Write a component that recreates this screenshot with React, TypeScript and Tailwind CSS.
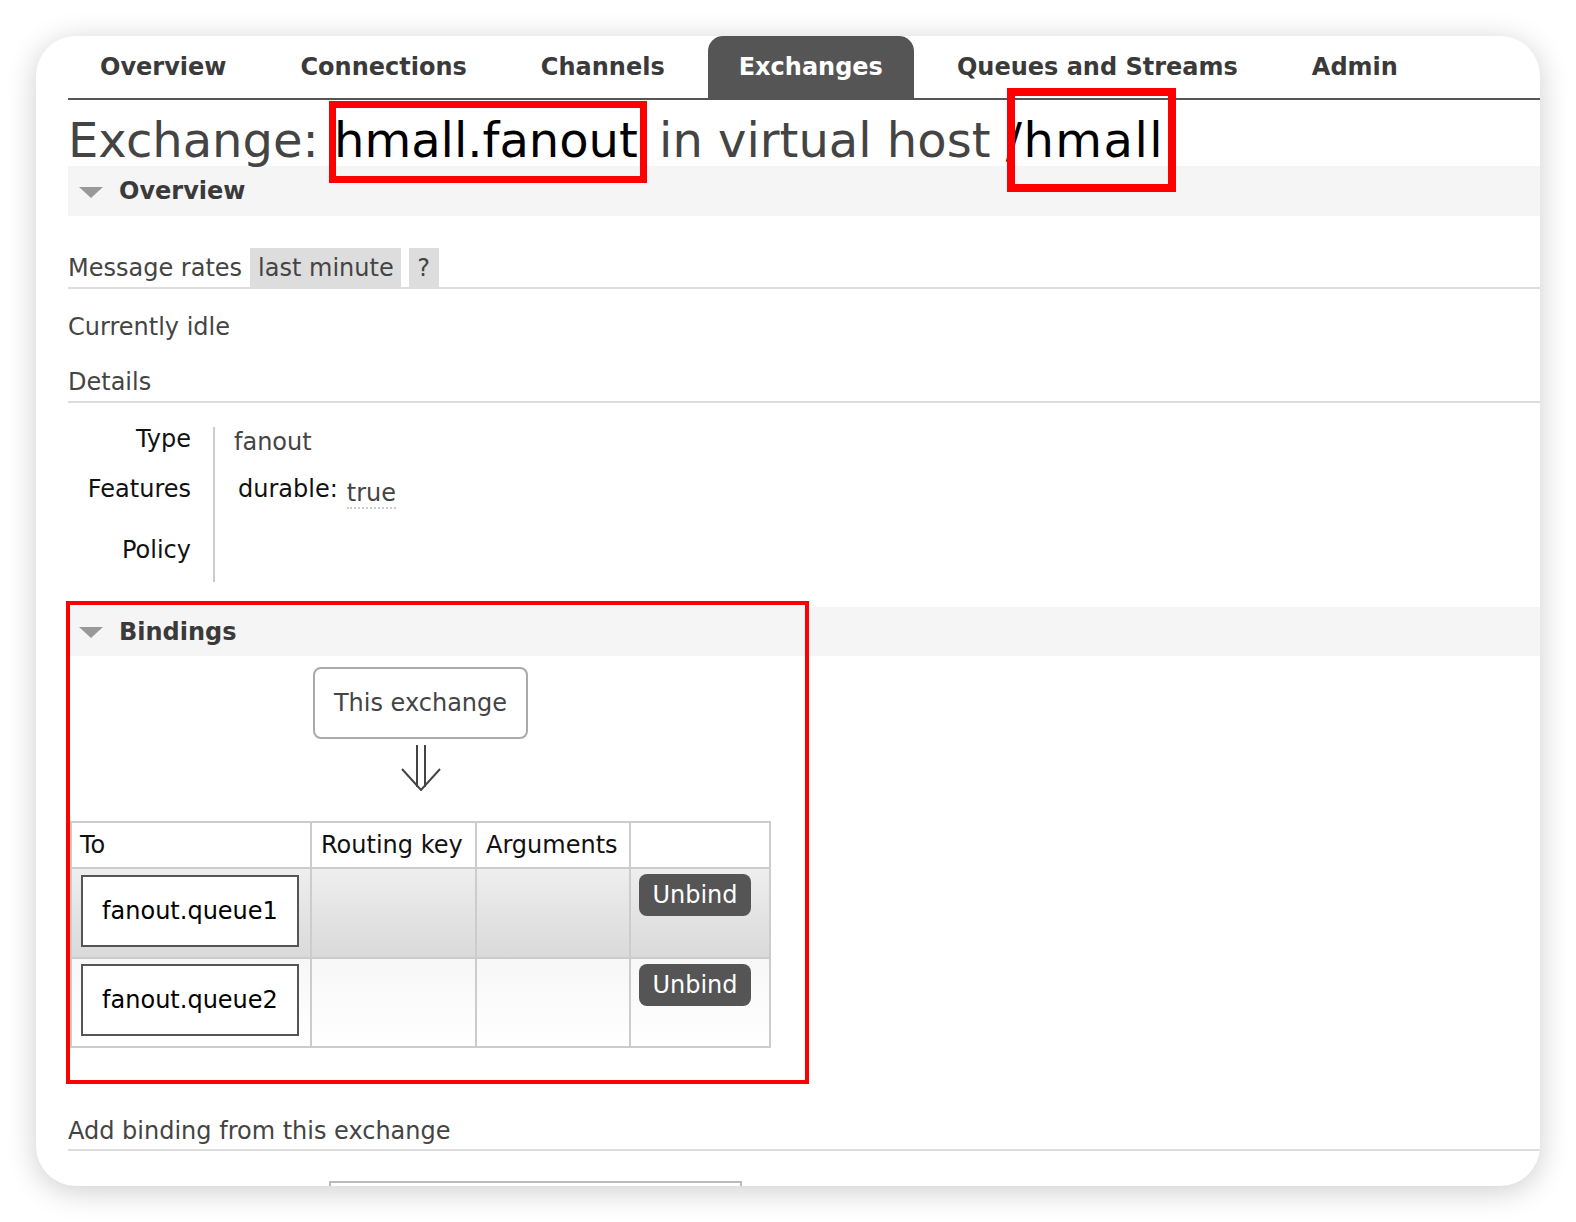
import React from "react";

const Triangle = () => (
  <svg width="24" height="11" viewBox="0 0 24 11" className="shrink-0">
    <polygon points="0,0 24,0 12,11" fill="#999999" />
  </svg>
);

const Arrow = () => (
  <svg width="40" height="46" viewBox="0 0 40 46">
    <line x1="16" y1="0" x2="16" y2="42" stroke="#444" strokeWidth="2" />
    <line x1="24" y1="0" x2="24" y2="42" stroke="#444" strokeWidth="2" />
    <polyline points="1,24 20,45 39,24" fill="none" stroke="#444" strokeWidth="2" />
  </svg>
);

const tabs = ["Overview", "Connections", "Channels", "Exchanges", "Queues and Streams", "Admin"];

export default function App() {
  return (
    <div
      className="w-[1576px] h-[1222px] bg-white pt-[36px] pl-[36px]"
      style={{ fontFamily: '"DejaVu Sans", Verdana, sans-serif' }}
    >
      <div className="relative w-[1504px] h-[1150px] bg-white rounded-[40px] overflow-hidden shadow-[0_5px_30px_rgba(0,0,0,0.2)] pl-[32px]">
        {/* Tabs */}
        <div className="flex items-end gap-[12px] h-[64px] border-b-2 border-[#555555] pl-[1px]">
          {tabs.map((t) => (
            <div
              key={t}
              className={
                t === "Exchanges"
                  ? "h-[62px] px-[31px] flex items-center text-[24px] font-bold text-white bg-[#555555] rounded-t-[15px] whitespace-nowrap"
                  : "h-[62px] px-[31px] flex items-center text-[24px] font-bold text-[#3a3a3a] whitespace-nowrap"
              }
            >
              {t}
            </div>
          ))}
        </div>

        {/* Title */}
        <h1 className="mt-[16px] text-[48px] leading-[48px] text-[#444444] whitespace-nowrap font-normal">
          <span>Exchange: </span>
          <span className="relative text-black">
            hmall.fanout
            <span className="absolute left-[-5px] right-[-9px] top-[-11px] bottom-[-15px] border-[7px] border-[#ff0000]" />
          </span>
          <span className="ml-[6px]"> in virtual host </span>
          <span className="relative text-black tracking-[1.5px]">
            /hmall
            <span className="absolute left-[1px] right-[-12px] top-[-24px] bottom-[-24px] border-[8px] border-[#ff0000]" />
          </span>
        </h1>

        {/* Overview band */}
        <div className="mt-[2px] h-[50px] bg-[#f5f5f5] flex items-center">
          <div className="ml-[11px] mt-[2px]">
            <Triangle />
          </div>
          <div className="ml-[16px] text-[24px] font-bold text-[#3a3a3a]">Overview</div>
        </div>

        {/* Message rates */}
        <div className="mt-[32px] flex items-stretch h-[41px] border-b-2 border-[#dddddd] text-[24px] text-[#444444]">
          <div className="flex items-center pr-[8px]">Message rates</div>
          <div className="flex items-center bg-[#dddddd] pl-[8px] pr-[7px] h-[39px]">last minute</div>
          <div className="flex items-center justify-center bg-[#dddddd] ml-[8px] w-[30px] h-[39px]">?</div>
        </div>

        <div className="mt-[24px] text-[24px] leading-[28px] text-[#444444]">Currently idle</div>

        <div className="mt-[27px] text-[24px] leading-[28px] text-[#444444] pb-[5px] border-b-2 border-[#dddddd]">
          Details
        </div>

        {/* Details table */}
        <div className="mt-[24px] flex text-[24px] leading-[24px]">
          <div className="w-[145px] pr-[22px] text-right text-[#111111] flex flex-col">
            <div className="h-[50px]">Type</div>
            <div className="h-[50px]">Features</div>
            <div className="h-[55px] pt-[11px]">Policy</div>
          </div>
          <div className="border-l-2 border-[#cccccc] pl-[19px] flex flex-col text-[#444444]">
            <div className="h-[50px] pt-[3px]">fanout</div>
            <div className="h-[50px] flex items-start pl-[4px]">
              <span className="text-[#111111]">durable:</span>
              <span className="ml-[9px] mt-[4px] pb-[2px] border-b-2 border-dotted border-[#cccccc]">true</span>
            </div>
            <div className="h-[55px]" />
          </div>
        </div>

        {/* Bindings band */}
        <div className="mt-[25px] h-[49px] bg-[#f5f5f5] flex items-center">
          <div className="ml-[11px] mt-[2px]">
            <Triangle />
          </div>
          <div className="ml-[16px] text-[24px] font-bold text-[#3a3a3a]">Bindings</div>
        </div>

        {/* Bindings content */}
        <div className="ml-[2px] w-[701px] flex flex-col items-center">
          <div className="mt-[11px] w-[215px] h-[72px] border-2 border-[#aaaaaa] rounded-[8px] flex items-center justify-center text-[24px] text-[#444444]">
            This exchange
          </div>
          <div className="mt-[6px] flex">
            <Arrow />
          </div>
          <div className="mt-[30px] w-[701px] border-t-2 border-l-2 border-[#cccccc] grid grid-cols-[240px_165px_154px_140px] text-[24px] text-[#111111]">
            <div className="h-[46px] border-r-2 border-b-2 border-[#cccccc] flex items-center pl-[8px]">To</div>
            <div className="h-[46px] border-r-2 border-b-2 border-[#cccccc] flex items-center pl-[9px]">Routing key</div>
            <div className="h-[46px] border-r-2 border-b-2 border-[#cccccc] flex items-center pl-[9px]">Arguments</div>
            <div className="h-[46px] border-r-2 border-b-2 border-[#cccccc]" />

            {[
              { q: "fanout.queue1", alt: true },
              { q: "fanout.queue2", alt: false },
            ].map((r) => {
              const bg = r.alt
                ? "bg-linear-to-b from-[#eeeeee] to-[#dadada]"
                : "bg-linear-to-b from-[#f7f7f7] to-[#ffffff]";
              const h = r.alt ? "h-[90px]" : "h-[89px]";
              const mt = r.alt ? "mt-[6px]" : "mt-[5px]";
              return (
                <React.Fragment key={r.q}>
                  <div className={`${h} ${bg} border-r-2 border-b-2 border-[#cccccc]`}>
                    <div className={`${mt} ml-[9px] w-[218px] h-[72px] border-2 border-[#555555] bg-white flex items-center justify-center text-black`}>
                      {r.q}
                    </div>
                  </div>
                  <div className={`${h} ${bg} border-r-2 border-b-2 border-[#cccccc]`} />
                  <div className={`${h} ${bg} border-r-2 border-b-2 border-[#cccccc]`} />
                  <div className={`${h} ${bg} border-r-2 border-b-2 border-[#cccccc]`}>
                    <div className="mt-[5px] ml-[8px] w-[112px] h-[42px] rounded-[8px] bg-[#555555] text-white flex items-center justify-center">
                      Unbind
                    </div>
                  </div>
                </React.Fragment>
              );
            })}
          </div>
        </div>

        {/* Add binding */}
        <div className="mt-[69px] text-[24px] leading-[28px] text-[#444444] pb-[4px] border-b-2 border-[#dddddd]">
          Add binding from this exchange
        </div>
        <div className="mt-[30px] ml-[261px] w-[413px] h-[40px] border-2 border-[#bbbbbb] bg-white" />

        {/* Red annotation around bindings */}
        <div className="absolute left-[30px] top-[565px] w-[743px] h-[483px] border-4 border-[#ff0000]" />
      </div>
    </div>
  );
}
